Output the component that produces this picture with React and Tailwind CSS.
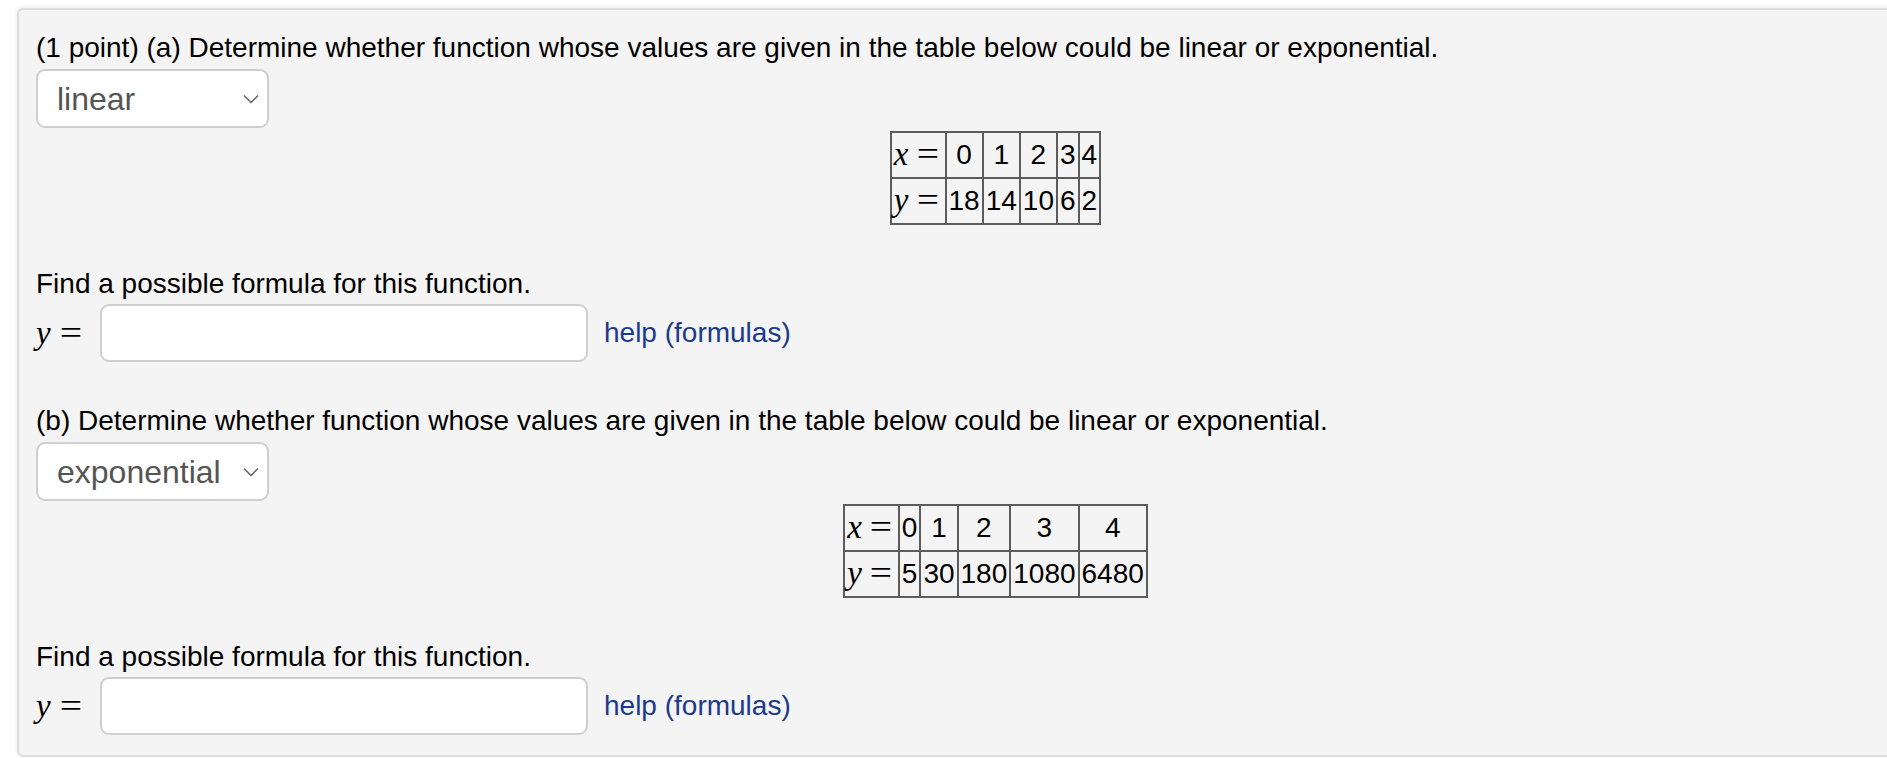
import React from 'react';

const sans = { fontFamily: '"Liberation Sans", Arial, sans-serif' };
const serif = { fontFamily: '"Liberation Serif", "Times New Roman", serif' };

const Chevron = () => (
  <svg width="16" height="10" viewBox="0 0 16 10" className="shrink-0">
    <polyline points="1,1.5 8,8.5 15,1.5" fill="none" stroke="#5f5f5f" strokeWidth="1.4" />
  </svg>
);

const Select = ({ value }) => (
  <div className="flex items-center justify-between w-[233px] h-[59px] bg-white border-2 border-[#cfcfcf] rounded-[9px] pl-[19px] pr-[8px]">
    <span className="text-[32px] text-[#555]">{value}</span>
    <Chevron />
  </div>
);

const Lhs = ({ v }) => (
  <span className="inline-flex items-baseline text-[33px]" style={serif}>
    <i>{v}</i>
    <span className="inline-block w-[22px] ml-[8px] mr-[4px] text-center scale-x-[1.2]">=</span>
  </span>
);

const cell = 'border-2 border-[#5c5c5c] px-[2px] py-[1px]';

const ValueTable = ({ xs, ys }) => (
  <table className="border-collapse text-[28px] leading-[40px]">
    <tbody>
      <tr>
        <td className={cell}><Lhs v="x" /></td>
        {xs.map((c, i) => (
          <td key={i} className={cell + ' text-center'}>{c}</td>
        ))}
      </tr>
      <tr>
        <td className={cell}><Lhs v="y" /></td>
        {ys.map((c, i) => (
          <td key={i} className={cell + ' text-center'}>{c}</td>
        ))}
      </tr>
    </tbody>
  </table>
);

const FormulaRow = () => (
  <div className="flex items-center h-[58px]">
    <span className="w-[64px] text-[33px] leading-[40px]" style={serif}>
      <i>y</i>
      <span className="inline-block w-[22px] ml-[9px] text-center scale-x-[1.2]">=</span>
    </span>
    <div className="w-[488px] h-[58px] bg-white border-2 border-[#cfcfcf] rounded-[9px]" />
    <a className="ml-[16px] text-[28px] text-[#1d3a8a]">help (formulas)</a>
  </div>
);

const Part = ({ title, value, xs, ys, first }) => (
  <div className={first ? '' : 'mt-[39px]'}>
    <p className="leading-[40px]">{title}</p>
    <div className="mt-[1px]">
      <Select value={value} />
    </div>
    <div className="flex justify-center mt-[3px]">
      <ValueTable xs={xs} ys={ys} />
    </div>
    <p className="leading-[40px] mt-[39px]">Find a possible formula for this function.</p>
    <FormulaRow />
  </div>
);

export default function App() {
  return (
    <div className="w-[1887px] h-[758px] overflow-hidden bg-white text-black text-[28px]" style={sans}>
      <div className="mt-[8px] ml-[17px] w-[1958px] h-[749px] bg-[#f4f4f4] border-2 border-[#dcdcdc] rounded-[6px] shadow-[0_-1px_4px_rgba(0,0,0,0.08)] pt-[18px] pl-[17px] pr-[18px]">
        <Part
          first
          title="(1 point) (a) Determine whether function whose values are given in the table below could be linear or exponential."
          value="linear"
          xs={['0', '1', '2', '3', '4']}
          ys={['18', '14', '10', '6', '2']}
        />
        <Part
          title="(b) Determine whether function whose values are given in the table below could be linear or exponential."
          value="exponential"
          xs={['0', '1', '2', '3', '4']}
          ys={['5', '30', '180', '1080', '6480']}
        />
      </div>
    </div>
  );
}
